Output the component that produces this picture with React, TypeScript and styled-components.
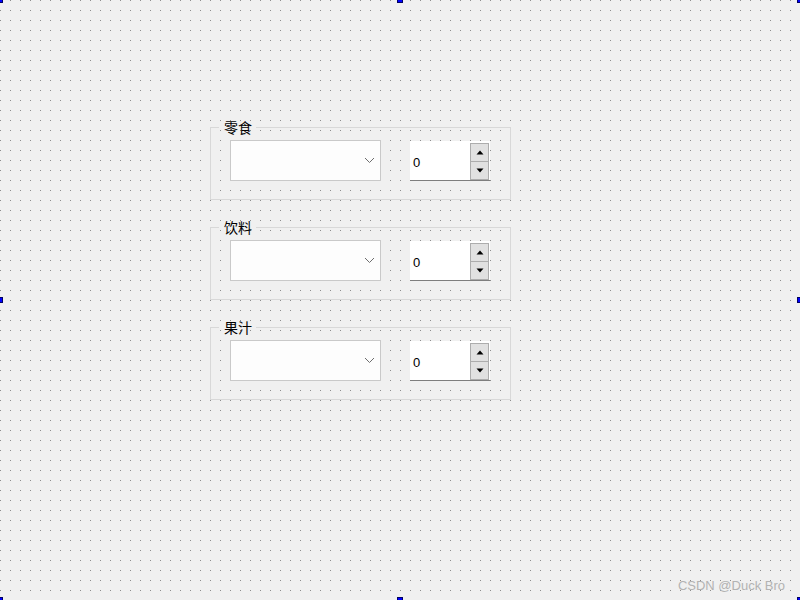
import React from "react";
import styled, { createGlobalStyle } from "styled-components";

const GlobalStyle = createGlobalStyle`
  html, body {
    margin: 0;
    padding: 0;
    background: #f0f0f0;
  }
`;

// designer form with a 10px dotted grid
const Form = styled.div`
  position: relative;
  width: 800px;
  height: 600px;
  overflow: hidden;
  background-color: #f0f0f0;
  background-image: linear-gradient(to right, transparent 0 1px, #f0f0f0 1px 10px),
    linear-gradient(to bottom, #8c8c8c 0 1px, #f0f0f0 1px 10px);
  background-size: 10px 10px;
  display: flex;
  flex-direction: column;
  padding: 120px 0 0 210px;
  box-sizing: border-box;
  gap: 20px;
  font-family: "Noto Sans CJK SC", "Liberation Sans", sans-serif;
`;

const GroupBox = styled.fieldset`
  box-sizing: border-box;
  width: 301px;
  margin: 0;
  padding: 6px 0 18px 19px;
  border: 1px solid #d8d8d8;
  min-width: 0;
`;

const Title = styled.legend`
  margin-left: -11px;
  padding: 0 4px 0 5px;
  font-size: 14px;
  line-height: 14px;
  height: 14px;
  color: #000;
`;

const Row = styled.div`
  display: flex;
  align-items: flex-start;
  gap: 29px;
`;

const Combo = styled.div`
  box-sizing: border-box;
  width: 151px;
  height: 41px;
  background: #fdfdfd;
  border: 1px solid #c9c9c9;
  display: flex;
  align-items: center;
  justify-content: flex-end;
  padding-right: 5px;
`;

const Spin = styled.div`
  box-sizing: border-box;
  width: 80px;
  height: 40px;
  margin-top: 1px;
  background: #ffffff;
  border-bottom: 1px solid #7e7e7e;
  display: flex;
  align-items: center;
  justify-content: space-between;
  padding: 1px 1px 0 3px;
`;

const Value = styled.span`
  font-family: "Liberation Sans", sans-serif;
  font-size: 13px;
  color: #000;
  margin-top: 2px;
`;

const Buttons = styled.div`
  display: flex;
  flex-direction: column;
  width: 19px;
  height: 37px;
  margin-top: 1px;
  align-self: flex-start;
`;

const StepButton = styled.div<{ $down?: boolean }>`
  flex: 1;
  box-sizing: border-box;
  background: #e1e1e1;
  border: 1px solid #adadad;
  border-top-width: ${(p) => (p.$down ? "0" : "1px")};
  display: flex;
  align-items: center;
  justify-content: center;
`;

const Handle = styled.div<{ $x: number; $y: number }>`
  position: absolute;
  left: ${(p) => p.$x - 3}px;
  top: ${(p) => p.$y - 3}px;
  width: 6px;
  height: 6px;
  box-sizing: border-box;
  background: #0000ff;
  border: 1px solid #000060;
`;

const Watermark = styled.div`
  position: absolute;
  right: 15px;
  bottom: 7px;
  font-family: "Liberation Sans", sans-serif;
  font-size: 13px;
  color: #b3b3b3;
`;

const Chevron = () => (
  <svg width="11" height="7" viewBox="0 0 11 7">
    <polyline points="1,1 5.5,5.5 10,1" fill="none" stroke="#6d6d6d" strokeWidth="1" />
  </svg>
);

const Arrow = ({ down }: { down?: boolean }) => (
  <svg width="8" height="5" viewBox="0 0 8 5">
    <polygon points={down ? "0.5,0.5 7.5,0.5 4,4.5" : "4,0.5 7.5,4.5 0.5,4.5"} fill="#000" />
  </svg>
);

const groups = ["零食", "饮料", "果汁"];

const handles = [
  [0, 0],
  [400, 0],
  [800, 0],
  [0, 300],
  [800, 300],
  [0, 600],
  [400, 600],
  [800, 600],
];

export default function App() {
  return (
    <>
      <GlobalStyle />
      <Form>
        {groups.map((name) => (
          <GroupBox key={name}>
            <Title>{name}</Title>
            <Row>
              <Combo>
                <Chevron />
              </Combo>
              <Spin>
                <Value>0</Value>
                <Buttons>
                  <StepButton>
                    <Arrow />
                  </StepButton>
                  <StepButton $down>
                    <Arrow down />
                  </StepButton>
                </Buttons>
              </Spin>
            </Row>
          </GroupBox>
        ))}
        {handles.map(([x, y]) => (
          <Handle key={`${x}-${y}`} $x={x} $y={y} />
        ))}
        <Watermark>CSDN @Duck Bro</Watermark>
      </Form>
    </>
  );
}
